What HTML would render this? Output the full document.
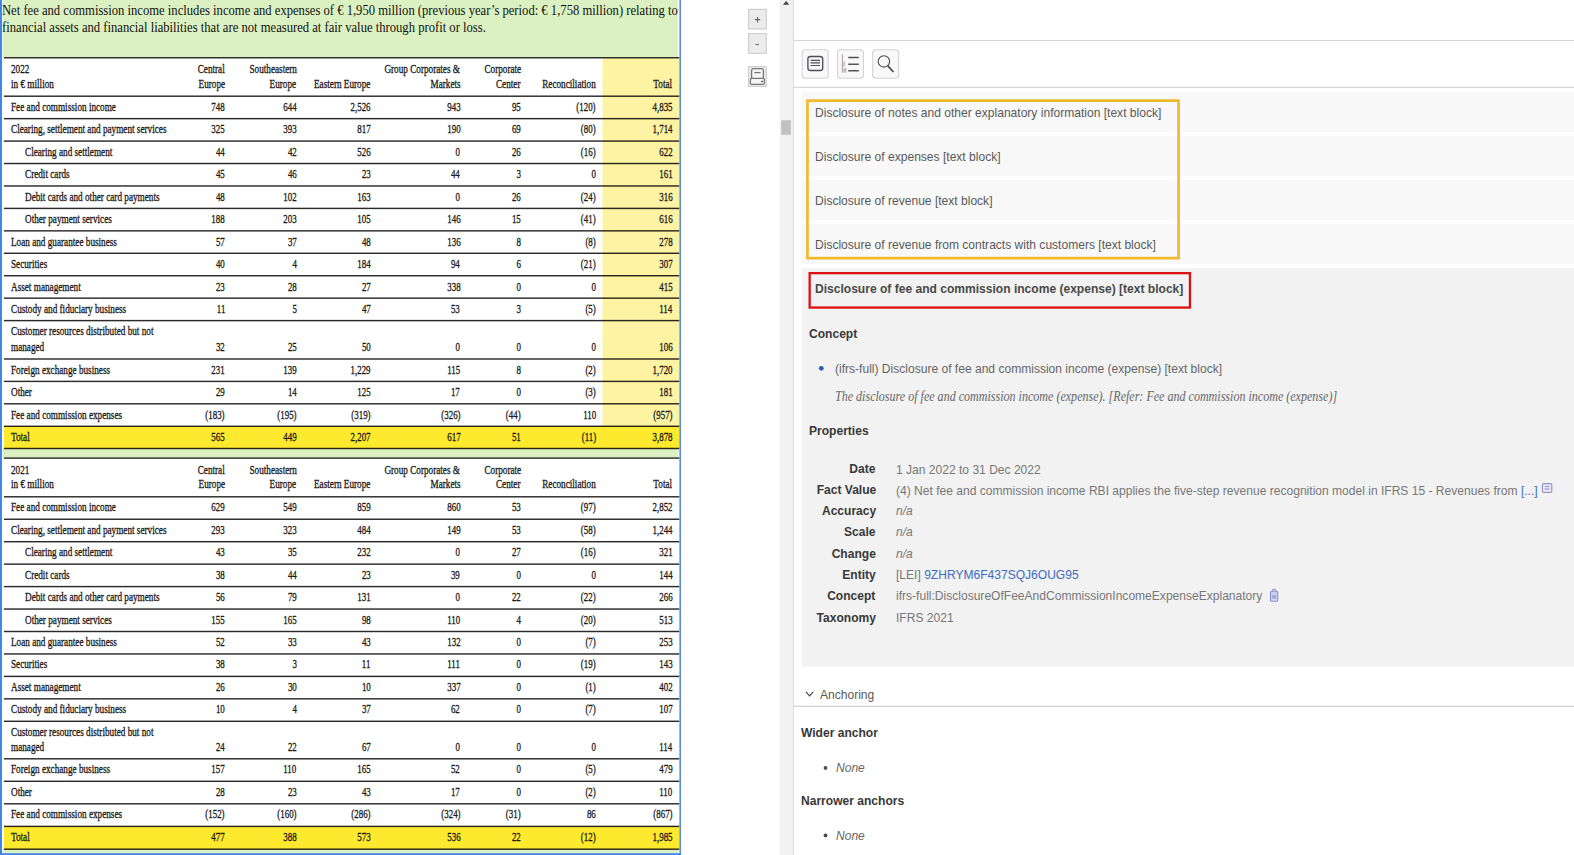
<!DOCTYPE html>
<html lang="en"><head><meta charset="utf-8">
<title>Inline XBRL Viewer</title>
<style>
html,body{margin:0;padding:0;background:#fff}
body{width:1574px;height:855px;overflow:hidden;position:relative;font-family:"Liberation Sans",sans-serif}
#pg{position:absolute;left:0;top:0;width:1574px;height:855px;overflow:hidden}
#sh{position:absolute;left:0;top:0}
.t{position:absolute;white-space:nowrap;line-height:1;transform-origin:0 0;font-family:"Liberation Sans",sans-serif;color:#555}
.r{transform-origin:100% 0}
.s{font-family:"Liberation Serif",serif}
.si{font-family:"Liberation Serif",serif;font-style:italic}
.i{font-style:italic}
.b{font-weight:bold}
.p{color:#111}
.c{color:#1a1a1a;-webkit-text-stroke:0.3px #1a1a1a}
.g00{color:#383838}
.g0{color:#484848}
.g1{color:#595959}
.g2{color:#666}
.g3{color:#777}
.lk{color:#3d6cc0}
</style></head>
<body><div id="pg">
<svg id="sh" width="1574" height="855" viewBox="0 0 1574 855">
<rect x="2.70" y="0.00" width="675.30" height="853.30" fill="#dcf1c1" />
<rect x="2.30" y="57.25" width="677.10" height="391.75" fill="#ffffff" />
<rect x="602.50" y="57.75" width="76.90" height="368.55" fill="#fdf3a3" />
<rect x="3.90" y="426.30" width="675.50" height="22.20" fill="#fde92d" />
<rect x="3.90" y="57.02" width="675.50" height="1.45" fill="rgba(0,0,0,0.83)" />
<rect x="3.90" y="95.48" width="675.50" height="1.45" fill="rgba(0,0,0,0.83)" />
<rect x="3.90" y="117.92" width="675.50" height="1.45" fill="rgba(0,0,0,0.83)" />
<rect x="3.90" y="140.36" width="675.50" height="1.45" fill="rgba(0,0,0,0.83)" />
<rect x="3.90" y="162.80" width="675.50" height="1.45" fill="rgba(0,0,0,0.83)" />
<rect x="3.90" y="185.24" width="675.50" height="1.45" fill="rgba(0,0,0,0.83)" />
<rect x="3.90" y="207.68" width="675.50" height="1.45" fill="rgba(0,0,0,0.83)" />
<rect x="3.90" y="230.12" width="675.50" height="1.45" fill="rgba(0,0,0,0.83)" />
<rect x="3.90" y="252.56" width="675.50" height="1.45" fill="rgba(0,0,0,0.83)" />
<rect x="3.90" y="275.00" width="675.50" height="1.45" fill="rgba(0,0,0,0.83)" />
<rect x="3.90" y="297.44" width="675.50" height="1.45" fill="rgba(0,0,0,0.83)" />
<rect x="3.90" y="319.88" width="675.50" height="1.45" fill="rgba(0,0,0,0.83)" />
<rect x="3.90" y="358.27" width="675.50" height="1.45" fill="rgba(0,0,0,0.83)" />
<rect x="3.90" y="380.67" width="675.50" height="1.45" fill="rgba(0,0,0,0.83)" />
<rect x="3.90" y="403.07" width="675.50" height="1.45" fill="rgba(0,0,0,0.83)" />
<rect x="3.90" y="425.57" width="675.50" height="1.45" fill="rgba(0,0,0,0.83)" />
<rect x="3.90" y="447.77" width="675.50" height="1.45" fill="rgba(0,0,0,0.83)" />
<rect x="2.30" y="457.60" width="677.10" height="392.10" fill="#ffffff" />
<rect x="3.90" y="826.40" width="675.50" height="22.80" fill="#fde92d" />
<rect x="3.90" y="457.38" width="675.50" height="1.45" fill="rgba(0,0,0,0.83)" />
<rect x="3.90" y="496.07" width="675.50" height="1.45" fill="rgba(0,0,0,0.83)" />
<rect x="3.90" y="518.52" width="675.50" height="1.45" fill="rgba(0,0,0,0.83)" />
<rect x="3.90" y="540.98" width="675.50" height="1.45" fill="rgba(0,0,0,0.83)" />
<rect x="3.90" y="563.42" width="675.50" height="1.45" fill="rgba(0,0,0,0.83)" />
<rect x="3.90" y="585.88" width="675.50" height="1.45" fill="rgba(0,0,0,0.83)" />
<rect x="3.90" y="608.32" width="675.50" height="1.45" fill="rgba(0,0,0,0.83)" />
<rect x="3.90" y="630.77" width="675.50" height="1.45" fill="rgba(0,0,0,0.83)" />
<rect x="3.90" y="653.23" width="675.50" height="1.45" fill="rgba(0,0,0,0.83)" />
<rect x="3.90" y="675.67" width="675.50" height="1.45" fill="rgba(0,0,0,0.83)" />
<rect x="3.90" y="698.12" width="675.50" height="1.45" fill="rgba(0,0,0,0.83)" />
<rect x="3.90" y="720.57" width="675.50" height="1.45" fill="rgba(0,0,0,0.83)" />
<rect x="3.90" y="758.07" width="675.50" height="1.45" fill="rgba(0,0,0,0.83)" />
<rect x="3.90" y="780.57" width="675.50" height="1.45" fill="rgba(0,0,0,0.83)" />
<rect x="3.90" y="803.07" width="675.50" height="1.45" fill="rgba(0,0,0,0.83)" />
<rect x="3.90" y="825.67" width="675.50" height="1.45" fill="rgba(0,0,0,0.83)" />
<rect x="3.90" y="848.48" width="675.50" height="1.45" fill="rgba(0,0,0,0.83)" />
<rect x="0.00" y="0.00" width="2.00" height="855.00" fill="#3f87e2" />
<rect x="679.40" y="0.00" width="1.65" height="855.00" fill="#5a8dd4" />
<rect x="0.00" y="853.20" width="681.10" height="1.80" fill="#3f87e2" />
<rect x="748.10" y="8.80" width="18.70" height="20.70" fill="#c9c9c9" />
<rect x="749.10" y="9.80" width="16.70" height="18.70" fill="#ececec" />
<rect x="748.10" y="33.10" width="18.70" height="20.70" fill="#c9c9c9" />
<rect x="749.10" y="34.10" width="16.70" height="18.70" fill="#ececec" />
<rect x="748.10" y="66.10" width="18.70" height="20.80" fill="#c9c9c9" />
<rect x="749.10" y="67.10" width="16.70" height="18.80" fill="#ececec" />
<path d="M754.9 19.6H760.2M757.55 16.9V22.5" stroke="#666" stroke-width="1.1" fill="none"/>
<path d="M755.4 44.5H758.9" stroke="#777" stroke-width="1.2" fill="none"/>
<g stroke="#777" stroke-width="1.3" fill="none"><path d="M751.6 78.2V70.4Q751.6 68.6 753.4 68.6H761.6Q763.4 68.6 763.4 70.4V78.2" fill="#f6f6f6"/><path d="M754.4 72.6H760.6"/><rect x="750.4" y="78.4" width="14" height="6" rx="1.5" fill="#f6f6f6"/></g><circle cx="762" cy="81.4" r="1" fill="#6a6a6a"/>
<rect x="779.80" y="0.00" width="14.10" height="855.00" fill="#f1f1f1" />
<rect x="792.90" y="0.00" width="1.00" height="855.00" fill="#dedede" />
<path d="M783.0 4.8L786.1 1.1L789.2 4.8Z" fill="#404040"/>
<rect x="781.20" y="120.20" width="9.70" height="14.50" fill="#c1c1c1" />
<rect x="793.90" y="39.95" width="780.10" height="1.10" fill="#d4d4d4" />
<rect x="793.90" y="86.75" width="780.10" height="1.10" fill="#d4d4d4" />
<rect x="802.20" y="49.7" width="26" height="28.6" rx="3" fill="#f8f8f8" stroke="#d3d3d3" stroke-width="1.1"/>
<rect x="837.50" y="49.7" width="26" height="28.6" rx="3" fill="#f8f8f8" stroke="#d3d3d3" stroke-width="1.1"/>
<rect x="872.70" y="49.7" width="26" height="28.6" rx="3" fill="#f8f8f8" stroke="#d3d3d3" stroke-width="1.1"/>
<g stroke="#4e4e55" fill="none"><rect x="807.9" y="56.5" width="14.8" height="14" rx="2.6" stroke-width="1.35"/><path d="M810.6 60.4H820M810.6 62.9H820M810.6 65.5H820" stroke-width="1.1"/></g>
<g stroke="#555" stroke-width="1.5" fill="none"><path d="M848.2 57.6H858.8M848.2 64.2H858.8M848.2 70.7H858.8"/></g><g stroke="#9f9297" stroke-width="0.9" fill="none"><path d="M842.4 54.3V72.6M844.1 61.4V66.6M844.1 68V72.6M845.8 68V72.6"/></g>
<g stroke="#4a4a4a" fill="none"><circle cx="883.9" cy="61.4" r="5.7" stroke-width="1.1"/><path d="M887.9 65.9L893.4 72" stroke-width="1.7"/></g>
<rect x="801.60" y="91.80" width="772.40" height="40.20" fill="#f8f8f8" />
<rect x="801.60" y="135.90" width="772.40" height="40.10" fill="#f8f8f8" />
<rect x="801.60" y="180.00" width="772.40" height="40.00" fill="#f8f8f8" />
<rect x="801.60" y="224.00" width="772.40" height="40.00" fill="#f8f8f8" />
<rect x="801.60" y="268.20" width="772.40" height="398.50" fill="#f2f2f2" />
<rect x="807.45" y="100.65" width="371.1" height="157.5" fill="none" stroke="#f0b92c" stroke-width="2.7"/>
<rect x="809.65" y="273.15" width="380.3" height="34.4" fill="none" stroke="#dc1212" stroke-width="2.3"/>
<circle cx="821.3" cy="368.3" r="2.4" fill="#2b5eb4"/>
<g fill="none"><rect x="1542.5" y="483.6" width="9.3" height="8.8" rx="1.2" stroke="#8f94c4" stroke-width="1.15" fill="#f0f0fc"/><path d="M1544.5 486.5H1549.8M1544.5 489H1549.8" stroke="#a5a8dc" stroke-width="1.5"/></g>
<g fill="none"><rect x="1270.5" y="591.2" width="7.2" height="10.1" rx="1.1" stroke="#8190cc" stroke-width="1.05" fill="#c9d1f3"/><path d="M1272.5 591.1Q1272.5 589.3 1274.1 589.3Q1275.7 589.3 1275.7 591.1" stroke="#8190cc" stroke-width="1.05" fill="#e9ecfb"/><rect x="1272.2" y="595" width="3.8" height="3.7" fill="#a4a6cc"/><rect x="1271.5" y="599.1" width="5.2" height="1.3" fill="#d3e2ff"/></g>
<path d="M806.0 691.8L809.6 695.8L813.2 691.8" stroke="#444" stroke-width="1.2" fill="none"/>
<rect x="793.90" y="705.70" width="780.10" height="1.20" fill="#cfcfcf" />
<circle cx="825.5" cy="767.9" r="1.9" fill="#4a4a4a"/>
<circle cx="825.5" cy="835.4" r="1.9" fill="#4a4a4a"/>
</svg>
<span class="t s p" style="left:2.00px;top:2.70px;font-size:14.2px;transform:scaleX(0.8899)">Net fee and commission income includes income and expenses of € 1,950 million (previous year’s period: € 1,758 million) relating to</span>
<span class="t s p" style="left:2.00px;top:19.70px;font-size:14.2px;transform:scaleX(0.8899)">financial assets and financial liabilities that are not measured at fair value through profit or loss.</span>
<span class="t s c" style="left:10.80px;top:63.95px;font-size:11.8px;transform:scaleX(0.7793)">2022</span>
<span class="t s c" style="left:10.80px;top:79.05px;font-size:11.8px;transform:scaleX(0.7793)">in € million</span>
<span class="t r s c" style="right:1349.10px;top:63.95px;font-size:11.8px;transform:scaleX(0.7793)">Central</span>
<span class="t r s c" style="right:1349.10px;top:79.05px;font-size:11.8px;transform:scaleX(0.7793)">Europe</span>
<span class="t r s c" style="right:1277.50px;top:63.95px;font-size:11.8px;transform:scaleX(0.7793)">Southeastern</span>
<span class="t r s c" style="right:1277.50px;top:79.05px;font-size:11.8px;transform:scaleX(0.7793)">Europe</span>
<span class="t r s c" style="right:1203.20px;top:79.05px;font-size:11.8px;transform:scaleX(0.7793)">Eastern Europe</span>
<span class="t r s c" style="right:1113.80px;top:63.95px;font-size:11.8px;transform:scaleX(0.7793)">Group Corporates &amp;</span>
<span class="t r s c" style="right:1113.80px;top:79.05px;font-size:11.8px;transform:scaleX(0.7793)">Markets</span>
<span class="t r s c" style="right:1053.20px;top:63.95px;font-size:11.8px;transform:scaleX(0.7793)">Corporate</span>
<span class="t r s c" style="right:1053.20px;top:79.05px;font-size:11.8px;transform:scaleX(0.7793)">Center</span>
<span class="t r s c" style="right:978.00px;top:79.05px;font-size:11.8px;transform:scaleX(0.7793)">Reconciliation</span>
<span class="t r s c" style="right:901.70px;top:79.05px;font-size:11.8px;transform:scaleX(0.7793)">Total</span>
<span class="t s c" style="left:10.80px;top:102.00px;font-size:11.8px;transform:scaleX(0.7793)">Fee and commission income</span>
<span class="t r s c" style="right:1349.10px;top:102.00px;font-size:11.8px;transform:scaleX(0.7537)">748</span>
<span class="t r s c" style="right:1277.50px;top:102.00px;font-size:11.8px;transform:scaleX(0.7537)">644</span>
<span class="t r s c" style="right:1203.20px;top:102.00px;font-size:11.8px;transform:scaleX(0.7537)">2,526</span>
<span class="t r s c" style="right:1113.80px;top:102.00px;font-size:11.8px;transform:scaleX(0.7537)">943</span>
<span class="t r s c" style="right:1053.20px;top:102.00px;font-size:11.8px;transform:scaleX(0.7537)">95</span>
<span class="t r s c" style="right:978.00px;top:102.00px;font-size:11.8px;transform:scaleX(0.7537)">(120)</span>
<span class="t r s c" style="right:901.70px;top:102.00px;font-size:11.8px;transform:scaleX(0.7537)">4,835</span>
<span class="t s c" style="left:10.80px;top:124.44px;font-size:11.8px;transform:scaleX(0.7793)">Clearing, settlement and payment services</span>
<span class="t r s c" style="right:1349.10px;top:124.44px;font-size:11.8px;transform:scaleX(0.7537)">325</span>
<span class="t r s c" style="right:1277.50px;top:124.44px;font-size:11.8px;transform:scaleX(0.7537)">393</span>
<span class="t r s c" style="right:1203.20px;top:124.44px;font-size:11.8px;transform:scaleX(0.7537)">817</span>
<span class="t r s c" style="right:1113.80px;top:124.44px;font-size:11.8px;transform:scaleX(0.7537)">190</span>
<span class="t r s c" style="right:1053.20px;top:124.44px;font-size:11.8px;transform:scaleX(0.7537)">69</span>
<span class="t r s c" style="right:978.00px;top:124.44px;font-size:11.8px;transform:scaleX(0.7537)">(80)</span>
<span class="t r s c" style="right:901.70px;top:124.44px;font-size:11.8px;transform:scaleX(0.7537)">1,714</span>
<span class="t s c" style="left:25.30px;top:146.88px;font-size:11.8px;transform:scaleX(0.7793)">Clearing and settlement</span>
<span class="t r s c" style="right:1349.10px;top:146.88px;font-size:11.8px;transform:scaleX(0.7537)">44</span>
<span class="t r s c" style="right:1277.50px;top:146.88px;font-size:11.8px;transform:scaleX(0.7537)">42</span>
<span class="t r s c" style="right:1203.20px;top:146.88px;font-size:11.8px;transform:scaleX(0.7537)">526</span>
<span class="t r s c" style="right:1113.80px;top:146.88px;font-size:11.8px;transform:scaleX(0.7537)">0</span>
<span class="t r s c" style="right:1053.20px;top:146.88px;font-size:11.8px;transform:scaleX(0.7537)">26</span>
<span class="t r s c" style="right:978.00px;top:146.88px;font-size:11.8px;transform:scaleX(0.7537)">(16)</span>
<span class="t r s c" style="right:901.70px;top:146.88px;font-size:11.8px;transform:scaleX(0.7537)">622</span>
<span class="t s c" style="left:25.30px;top:169.32px;font-size:11.8px;transform:scaleX(0.7793)">Credit cards</span>
<span class="t r s c" style="right:1349.10px;top:169.32px;font-size:11.8px;transform:scaleX(0.7537)">45</span>
<span class="t r s c" style="right:1277.50px;top:169.32px;font-size:11.8px;transform:scaleX(0.7537)">46</span>
<span class="t r s c" style="right:1203.20px;top:169.32px;font-size:11.8px;transform:scaleX(0.7537)">23</span>
<span class="t r s c" style="right:1113.80px;top:169.32px;font-size:11.8px;transform:scaleX(0.7537)">44</span>
<span class="t r s c" style="right:1053.20px;top:169.32px;font-size:11.8px;transform:scaleX(0.7537)">3</span>
<span class="t r s c" style="right:978.00px;top:169.32px;font-size:11.8px;transform:scaleX(0.7537)">0</span>
<span class="t r s c" style="right:901.70px;top:169.32px;font-size:11.8px;transform:scaleX(0.7537)">161</span>
<span class="t s c" style="left:25.30px;top:191.76px;font-size:11.8px;transform:scaleX(0.7793)">Debit cards and other card payments</span>
<span class="t r s c" style="right:1349.10px;top:191.76px;font-size:11.8px;transform:scaleX(0.7537)">48</span>
<span class="t r s c" style="right:1277.50px;top:191.76px;font-size:11.8px;transform:scaleX(0.7537)">102</span>
<span class="t r s c" style="right:1203.20px;top:191.76px;font-size:11.8px;transform:scaleX(0.7537)">163</span>
<span class="t r s c" style="right:1113.80px;top:191.76px;font-size:11.8px;transform:scaleX(0.7537)">0</span>
<span class="t r s c" style="right:1053.20px;top:191.76px;font-size:11.8px;transform:scaleX(0.7537)">26</span>
<span class="t r s c" style="right:978.00px;top:191.76px;font-size:11.8px;transform:scaleX(0.7537)">(24)</span>
<span class="t r s c" style="right:901.70px;top:191.76px;font-size:11.8px;transform:scaleX(0.7537)">316</span>
<span class="t s c" style="left:25.30px;top:214.20px;font-size:11.8px;transform:scaleX(0.7793)">Other payment services</span>
<span class="t r s c" style="right:1349.10px;top:214.20px;font-size:11.8px;transform:scaleX(0.7537)">188</span>
<span class="t r s c" style="right:1277.50px;top:214.20px;font-size:11.8px;transform:scaleX(0.7537)">203</span>
<span class="t r s c" style="right:1203.20px;top:214.20px;font-size:11.8px;transform:scaleX(0.7537)">105</span>
<span class="t r s c" style="right:1113.80px;top:214.20px;font-size:11.8px;transform:scaleX(0.7537)">146</span>
<span class="t r s c" style="right:1053.20px;top:214.20px;font-size:11.8px;transform:scaleX(0.7537)">15</span>
<span class="t r s c" style="right:978.00px;top:214.20px;font-size:11.8px;transform:scaleX(0.7537)">(41)</span>
<span class="t r s c" style="right:901.70px;top:214.20px;font-size:11.8px;transform:scaleX(0.7537)">616</span>
<span class="t s c" style="left:10.80px;top:236.64px;font-size:11.8px;transform:scaleX(0.7793)">Loan and guarantee business</span>
<span class="t r s c" style="right:1349.10px;top:236.64px;font-size:11.8px;transform:scaleX(0.7537)">57</span>
<span class="t r s c" style="right:1277.50px;top:236.64px;font-size:11.8px;transform:scaleX(0.7537)">37</span>
<span class="t r s c" style="right:1203.20px;top:236.64px;font-size:11.8px;transform:scaleX(0.7537)">48</span>
<span class="t r s c" style="right:1113.80px;top:236.64px;font-size:11.8px;transform:scaleX(0.7537)">136</span>
<span class="t r s c" style="right:1053.20px;top:236.64px;font-size:11.8px;transform:scaleX(0.7537)">8</span>
<span class="t r s c" style="right:978.00px;top:236.64px;font-size:11.8px;transform:scaleX(0.7537)">(8)</span>
<span class="t r s c" style="right:901.70px;top:236.64px;font-size:11.8px;transform:scaleX(0.7537)">278</span>
<span class="t s c" style="left:10.80px;top:259.08px;font-size:11.8px;transform:scaleX(0.7793)">Securities</span>
<span class="t r s c" style="right:1349.10px;top:259.08px;font-size:11.8px;transform:scaleX(0.7537)">40</span>
<span class="t r s c" style="right:1277.50px;top:259.08px;font-size:11.8px;transform:scaleX(0.7537)">4</span>
<span class="t r s c" style="right:1203.20px;top:259.08px;font-size:11.8px;transform:scaleX(0.7537)">184</span>
<span class="t r s c" style="right:1113.80px;top:259.08px;font-size:11.8px;transform:scaleX(0.7537)">94</span>
<span class="t r s c" style="right:1053.20px;top:259.08px;font-size:11.8px;transform:scaleX(0.7537)">6</span>
<span class="t r s c" style="right:978.00px;top:259.08px;font-size:11.8px;transform:scaleX(0.7537)">(21)</span>
<span class="t r s c" style="right:901.70px;top:259.08px;font-size:11.8px;transform:scaleX(0.7537)">307</span>
<span class="t s c" style="left:10.80px;top:281.52px;font-size:11.8px;transform:scaleX(0.7793)">Asset management</span>
<span class="t r s c" style="right:1349.10px;top:281.52px;font-size:11.8px;transform:scaleX(0.7537)">23</span>
<span class="t r s c" style="right:1277.50px;top:281.52px;font-size:11.8px;transform:scaleX(0.7537)">28</span>
<span class="t r s c" style="right:1203.20px;top:281.52px;font-size:11.8px;transform:scaleX(0.7537)">27</span>
<span class="t r s c" style="right:1113.80px;top:281.52px;font-size:11.8px;transform:scaleX(0.7537)">338</span>
<span class="t r s c" style="right:1053.20px;top:281.52px;font-size:11.8px;transform:scaleX(0.7537)">0</span>
<span class="t r s c" style="right:978.00px;top:281.52px;font-size:11.8px;transform:scaleX(0.7537)">0</span>
<span class="t r s c" style="right:901.70px;top:281.52px;font-size:11.8px;transform:scaleX(0.7537)">415</span>
<span class="t s c" style="left:10.80px;top:303.96px;font-size:11.8px;transform:scaleX(0.7793)">Custody and fiduciary business</span>
<span class="t r s c" style="right:1349.10px;top:303.96px;font-size:11.8px;transform:scaleX(0.7537)">11</span>
<span class="t r s c" style="right:1277.50px;top:303.96px;font-size:11.8px;transform:scaleX(0.7537)">5</span>
<span class="t r s c" style="right:1203.20px;top:303.96px;font-size:11.8px;transform:scaleX(0.7537)">47</span>
<span class="t r s c" style="right:1113.80px;top:303.96px;font-size:11.8px;transform:scaleX(0.7537)">53</span>
<span class="t r s c" style="right:1053.20px;top:303.96px;font-size:11.8px;transform:scaleX(0.7537)">3</span>
<span class="t r s c" style="right:978.00px;top:303.96px;font-size:11.8px;transform:scaleX(0.7537)">(5)</span>
<span class="t r s c" style="right:901.70px;top:303.96px;font-size:11.8px;transform:scaleX(0.7537)">114</span>
<span class="t s c" style="left:10.80px;top:326.30px;font-size:11.8px;transform:scaleX(0.7793)">Customer resources distributed but not</span>
<span class="t s c" style="left:10.80px;top:341.70px;font-size:11.8px;transform:scaleX(0.7793)">managed</span>
<span class="t r s c" style="right:1349.10px;top:341.70px;font-size:11.8px;transform:scaleX(0.7537)">32</span>
<span class="t r s c" style="right:1277.50px;top:341.70px;font-size:11.8px;transform:scaleX(0.7537)">25</span>
<span class="t r s c" style="right:1203.20px;top:341.70px;font-size:11.8px;transform:scaleX(0.7537)">50</span>
<span class="t r s c" style="right:1113.80px;top:341.70px;font-size:11.8px;transform:scaleX(0.7537)">0</span>
<span class="t r s c" style="right:1053.20px;top:341.70px;font-size:11.8px;transform:scaleX(0.7537)">0</span>
<span class="t r s c" style="right:978.00px;top:341.70px;font-size:11.8px;transform:scaleX(0.7537)">0</span>
<span class="t r s c" style="right:901.70px;top:341.70px;font-size:11.8px;transform:scaleX(0.7537)">106</span>
<span class="t s c" style="left:10.80px;top:364.80px;font-size:11.8px;transform:scaleX(0.7793)">Foreign exchange business</span>
<span class="t r s c" style="right:1349.10px;top:364.80px;font-size:11.8px;transform:scaleX(0.7537)">231</span>
<span class="t r s c" style="right:1277.50px;top:364.80px;font-size:11.8px;transform:scaleX(0.7537)">139</span>
<span class="t r s c" style="right:1203.20px;top:364.80px;font-size:11.8px;transform:scaleX(0.7537)">1,229</span>
<span class="t r s c" style="right:1113.80px;top:364.80px;font-size:11.8px;transform:scaleX(0.7537)">115</span>
<span class="t r s c" style="right:1053.20px;top:364.80px;font-size:11.8px;transform:scaleX(0.7537)">8</span>
<span class="t r s c" style="right:978.00px;top:364.80px;font-size:11.8px;transform:scaleX(0.7537)">(2)</span>
<span class="t r s c" style="right:901.70px;top:364.80px;font-size:11.8px;transform:scaleX(0.7537)">1,720</span>
<span class="t s c" style="left:10.80px;top:387.20px;font-size:11.8px;transform:scaleX(0.7793)">Other</span>
<span class="t r s c" style="right:1349.10px;top:387.20px;font-size:11.8px;transform:scaleX(0.7537)">29</span>
<span class="t r s c" style="right:1277.50px;top:387.20px;font-size:11.8px;transform:scaleX(0.7537)">14</span>
<span class="t r s c" style="right:1203.20px;top:387.20px;font-size:11.8px;transform:scaleX(0.7537)">125</span>
<span class="t r s c" style="right:1113.80px;top:387.20px;font-size:11.8px;transform:scaleX(0.7537)">17</span>
<span class="t r s c" style="right:1053.20px;top:387.20px;font-size:11.8px;transform:scaleX(0.7537)">0</span>
<span class="t r s c" style="right:978.00px;top:387.20px;font-size:11.8px;transform:scaleX(0.7537)">(3)</span>
<span class="t r s c" style="right:901.70px;top:387.20px;font-size:11.8px;transform:scaleX(0.7537)">181</span>
<span class="t s c" style="left:10.80px;top:409.60px;font-size:11.8px;transform:scaleX(0.7793)">Fee and commission expenses</span>
<span class="t r s c" style="right:1349.10px;top:409.60px;font-size:11.8px;transform:scaleX(0.7537)">(183)</span>
<span class="t r s c" style="right:1277.50px;top:409.60px;font-size:11.8px;transform:scaleX(0.7537)">(195)</span>
<span class="t r s c" style="right:1203.20px;top:409.60px;font-size:11.8px;transform:scaleX(0.7537)">(319)</span>
<span class="t r s c" style="right:1113.80px;top:409.60px;font-size:11.8px;transform:scaleX(0.7537)">(326)</span>
<span class="t r s c" style="right:1053.20px;top:409.60px;font-size:11.8px;transform:scaleX(0.7537)">(44)</span>
<span class="t r s c" style="right:978.00px;top:409.60px;font-size:11.8px;transform:scaleX(0.7537)">110</span>
<span class="t r s c" style="right:901.70px;top:409.60px;font-size:11.8px;transform:scaleX(0.7537)">(957)</span>
<span class="t s c" style="left:10.80px;top:432.10px;font-size:11.8px;transform:scaleX(0.7793)">Total</span>
<span class="t r s c" style="right:1349.10px;top:432.10px;font-size:11.8px;transform:scaleX(0.7537)">565</span>
<span class="t r s c" style="right:1277.50px;top:432.10px;font-size:11.8px;transform:scaleX(0.7537)">449</span>
<span class="t r s c" style="right:1203.20px;top:432.10px;font-size:11.8px;transform:scaleX(0.7537)">2,207</span>
<span class="t r s c" style="right:1113.80px;top:432.10px;font-size:11.8px;transform:scaleX(0.7537)">617</span>
<span class="t r s c" style="right:1053.20px;top:432.10px;font-size:11.8px;transform:scaleX(0.7537)">51</span>
<span class="t r s c" style="right:978.00px;top:432.10px;font-size:11.8px;transform:scaleX(0.7537)">(11)</span>
<span class="t r s c" style="right:901.70px;top:432.10px;font-size:11.8px;transform:scaleX(0.7537)">3,878</span>
<span class="t s c" style="left:10.80px;top:464.70px;font-size:11.8px;transform:scaleX(0.7793)">2021</span>
<span class="t s c" style="left:10.80px;top:479.40px;font-size:11.8px;transform:scaleX(0.7793)">in € million</span>
<span class="t r s c" style="right:1349.10px;top:464.70px;font-size:11.8px;transform:scaleX(0.7793)">Central</span>
<span class="t r s c" style="right:1349.10px;top:479.40px;font-size:11.8px;transform:scaleX(0.7793)">Europe</span>
<span class="t r s c" style="right:1277.50px;top:464.70px;font-size:11.8px;transform:scaleX(0.7793)">Southeastern</span>
<span class="t r s c" style="right:1277.50px;top:479.40px;font-size:11.8px;transform:scaleX(0.7793)">Europe</span>
<span class="t r s c" style="right:1203.20px;top:479.40px;font-size:11.8px;transform:scaleX(0.7793)">Eastern Europe</span>
<span class="t r s c" style="right:1113.80px;top:464.70px;font-size:11.8px;transform:scaleX(0.7793)">Group Corporates &amp;</span>
<span class="t r s c" style="right:1113.80px;top:479.40px;font-size:11.8px;transform:scaleX(0.7793)">Markets</span>
<span class="t r s c" style="right:1053.20px;top:464.70px;font-size:11.8px;transform:scaleX(0.7793)">Corporate</span>
<span class="t r s c" style="right:1053.20px;top:479.40px;font-size:11.8px;transform:scaleX(0.7793)">Center</span>
<span class="t r s c" style="right:978.00px;top:479.40px;font-size:11.8px;transform:scaleX(0.7793)">Reconciliation</span>
<span class="t r s c" style="right:901.70px;top:479.40px;font-size:11.8px;transform:scaleX(0.7793)">Total</span>
<span class="t s c" style="left:10.80px;top:502.30px;font-size:11.8px;transform:scaleX(0.7793)">Fee and commission income</span>
<span class="t r s c" style="right:1349.10px;top:502.30px;font-size:11.8px;transform:scaleX(0.7537)">629</span>
<span class="t r s c" style="right:1277.50px;top:502.30px;font-size:11.8px;transform:scaleX(0.7537)">549</span>
<span class="t r s c" style="right:1203.20px;top:502.30px;font-size:11.8px;transform:scaleX(0.7537)">859</span>
<span class="t r s c" style="right:1113.80px;top:502.30px;font-size:11.8px;transform:scaleX(0.7537)">860</span>
<span class="t r s c" style="right:1053.20px;top:502.30px;font-size:11.8px;transform:scaleX(0.7537)">53</span>
<span class="t r s c" style="right:978.00px;top:502.30px;font-size:11.8px;transform:scaleX(0.7537)">(97)</span>
<span class="t r s c" style="right:901.70px;top:502.30px;font-size:11.8px;transform:scaleX(0.7537)">2,852</span>
<span class="t s c" style="left:10.80px;top:524.75px;font-size:11.8px;transform:scaleX(0.7793)">Clearing, settlement and payment services</span>
<span class="t r s c" style="right:1349.10px;top:524.75px;font-size:11.8px;transform:scaleX(0.7537)">293</span>
<span class="t r s c" style="right:1277.50px;top:524.75px;font-size:11.8px;transform:scaleX(0.7537)">323</span>
<span class="t r s c" style="right:1203.20px;top:524.75px;font-size:11.8px;transform:scaleX(0.7537)">484</span>
<span class="t r s c" style="right:1113.80px;top:524.75px;font-size:11.8px;transform:scaleX(0.7537)">149</span>
<span class="t r s c" style="right:1053.20px;top:524.75px;font-size:11.8px;transform:scaleX(0.7537)">53</span>
<span class="t r s c" style="right:978.00px;top:524.75px;font-size:11.8px;transform:scaleX(0.7537)">(58)</span>
<span class="t r s c" style="right:901.70px;top:524.75px;font-size:11.8px;transform:scaleX(0.7537)">1,244</span>
<span class="t s c" style="left:25.30px;top:547.20px;font-size:11.8px;transform:scaleX(0.7793)">Clearing and settlement</span>
<span class="t r s c" style="right:1349.10px;top:547.20px;font-size:11.8px;transform:scaleX(0.7537)">43</span>
<span class="t r s c" style="right:1277.50px;top:547.20px;font-size:11.8px;transform:scaleX(0.7537)">35</span>
<span class="t r s c" style="right:1203.20px;top:547.20px;font-size:11.8px;transform:scaleX(0.7537)">232</span>
<span class="t r s c" style="right:1113.80px;top:547.20px;font-size:11.8px;transform:scaleX(0.7537)">0</span>
<span class="t r s c" style="right:1053.20px;top:547.20px;font-size:11.8px;transform:scaleX(0.7537)">27</span>
<span class="t r s c" style="right:978.00px;top:547.20px;font-size:11.8px;transform:scaleX(0.7537)">(16)</span>
<span class="t r s c" style="right:901.70px;top:547.20px;font-size:11.8px;transform:scaleX(0.7537)">321</span>
<span class="t s c" style="left:25.30px;top:569.65px;font-size:11.8px;transform:scaleX(0.7793)">Credit cards</span>
<span class="t r s c" style="right:1349.10px;top:569.65px;font-size:11.8px;transform:scaleX(0.7537)">38</span>
<span class="t r s c" style="right:1277.50px;top:569.65px;font-size:11.8px;transform:scaleX(0.7537)">44</span>
<span class="t r s c" style="right:1203.20px;top:569.65px;font-size:11.8px;transform:scaleX(0.7537)">23</span>
<span class="t r s c" style="right:1113.80px;top:569.65px;font-size:11.8px;transform:scaleX(0.7537)">39</span>
<span class="t r s c" style="right:1053.20px;top:569.65px;font-size:11.8px;transform:scaleX(0.7537)">0</span>
<span class="t r s c" style="right:978.00px;top:569.65px;font-size:11.8px;transform:scaleX(0.7537)">0</span>
<span class="t r s c" style="right:901.70px;top:569.65px;font-size:11.8px;transform:scaleX(0.7537)">144</span>
<span class="t s c" style="left:25.30px;top:592.10px;font-size:11.8px;transform:scaleX(0.7793)">Debit cards and other card payments</span>
<span class="t r s c" style="right:1349.10px;top:592.10px;font-size:11.8px;transform:scaleX(0.7537)">56</span>
<span class="t r s c" style="right:1277.50px;top:592.10px;font-size:11.8px;transform:scaleX(0.7537)">79</span>
<span class="t r s c" style="right:1203.20px;top:592.10px;font-size:11.8px;transform:scaleX(0.7537)">131</span>
<span class="t r s c" style="right:1113.80px;top:592.10px;font-size:11.8px;transform:scaleX(0.7537)">0</span>
<span class="t r s c" style="right:1053.20px;top:592.10px;font-size:11.8px;transform:scaleX(0.7537)">22</span>
<span class="t r s c" style="right:978.00px;top:592.10px;font-size:11.8px;transform:scaleX(0.7537)">(22)</span>
<span class="t r s c" style="right:901.70px;top:592.10px;font-size:11.8px;transform:scaleX(0.7537)">266</span>
<span class="t s c" style="left:25.30px;top:614.55px;font-size:11.8px;transform:scaleX(0.7793)">Other payment services</span>
<span class="t r s c" style="right:1349.10px;top:614.55px;font-size:11.8px;transform:scaleX(0.7537)">155</span>
<span class="t r s c" style="right:1277.50px;top:614.55px;font-size:11.8px;transform:scaleX(0.7537)">165</span>
<span class="t r s c" style="right:1203.20px;top:614.55px;font-size:11.8px;transform:scaleX(0.7537)">98</span>
<span class="t r s c" style="right:1113.80px;top:614.55px;font-size:11.8px;transform:scaleX(0.7537)">110</span>
<span class="t r s c" style="right:1053.20px;top:614.55px;font-size:11.8px;transform:scaleX(0.7537)">4</span>
<span class="t r s c" style="right:978.00px;top:614.55px;font-size:11.8px;transform:scaleX(0.7537)">(20)</span>
<span class="t r s c" style="right:901.70px;top:614.55px;font-size:11.8px;transform:scaleX(0.7537)">513</span>
<span class="t s c" style="left:10.80px;top:637.00px;font-size:11.8px;transform:scaleX(0.7793)">Loan and guarantee business</span>
<span class="t r s c" style="right:1349.10px;top:637.00px;font-size:11.8px;transform:scaleX(0.7537)">52</span>
<span class="t r s c" style="right:1277.50px;top:637.00px;font-size:11.8px;transform:scaleX(0.7537)">33</span>
<span class="t r s c" style="right:1203.20px;top:637.00px;font-size:11.8px;transform:scaleX(0.7537)">43</span>
<span class="t r s c" style="right:1113.80px;top:637.00px;font-size:11.8px;transform:scaleX(0.7537)">132</span>
<span class="t r s c" style="right:1053.20px;top:637.00px;font-size:11.8px;transform:scaleX(0.7537)">0</span>
<span class="t r s c" style="right:978.00px;top:637.00px;font-size:11.8px;transform:scaleX(0.7537)">(7)</span>
<span class="t r s c" style="right:901.70px;top:637.00px;font-size:11.8px;transform:scaleX(0.7537)">253</span>
<span class="t s c" style="left:10.80px;top:659.45px;font-size:11.8px;transform:scaleX(0.7793)">Securities</span>
<span class="t r s c" style="right:1349.10px;top:659.45px;font-size:11.8px;transform:scaleX(0.7537)">38</span>
<span class="t r s c" style="right:1277.50px;top:659.45px;font-size:11.8px;transform:scaleX(0.7537)">3</span>
<span class="t r s c" style="right:1203.20px;top:659.45px;font-size:11.8px;transform:scaleX(0.7537)">11</span>
<span class="t r s c" style="right:1113.80px;top:659.45px;font-size:11.8px;transform:scaleX(0.7537)">111</span>
<span class="t r s c" style="right:1053.20px;top:659.45px;font-size:11.8px;transform:scaleX(0.7537)">0</span>
<span class="t r s c" style="right:978.00px;top:659.45px;font-size:11.8px;transform:scaleX(0.7537)">(19)</span>
<span class="t r s c" style="right:901.70px;top:659.45px;font-size:11.8px;transform:scaleX(0.7537)">143</span>
<span class="t s c" style="left:10.80px;top:681.90px;font-size:11.8px;transform:scaleX(0.7793)">Asset management</span>
<span class="t r s c" style="right:1349.10px;top:681.90px;font-size:11.8px;transform:scaleX(0.7537)">26</span>
<span class="t r s c" style="right:1277.50px;top:681.90px;font-size:11.8px;transform:scaleX(0.7537)">30</span>
<span class="t r s c" style="right:1203.20px;top:681.90px;font-size:11.8px;transform:scaleX(0.7537)">10</span>
<span class="t r s c" style="right:1113.80px;top:681.90px;font-size:11.8px;transform:scaleX(0.7537)">337</span>
<span class="t r s c" style="right:1053.20px;top:681.90px;font-size:11.8px;transform:scaleX(0.7537)">0</span>
<span class="t r s c" style="right:978.00px;top:681.90px;font-size:11.8px;transform:scaleX(0.7537)">(1)</span>
<span class="t r s c" style="right:901.70px;top:681.90px;font-size:11.8px;transform:scaleX(0.7537)">402</span>
<span class="t s c" style="left:10.80px;top:704.35px;font-size:11.8px;transform:scaleX(0.7793)">Custody and fiduciary business</span>
<span class="t r s c" style="right:1349.10px;top:704.35px;font-size:11.8px;transform:scaleX(0.7537)">10</span>
<span class="t r s c" style="right:1277.50px;top:704.35px;font-size:11.8px;transform:scaleX(0.7537)">4</span>
<span class="t r s c" style="right:1203.20px;top:704.35px;font-size:11.8px;transform:scaleX(0.7537)">37</span>
<span class="t r s c" style="right:1113.80px;top:704.35px;font-size:11.8px;transform:scaleX(0.7537)">62</span>
<span class="t r s c" style="right:1053.20px;top:704.35px;font-size:11.8px;transform:scaleX(0.7537)">0</span>
<span class="t r s c" style="right:978.00px;top:704.35px;font-size:11.8px;transform:scaleX(0.7537)">(7)</span>
<span class="t r s c" style="right:901.70px;top:704.35px;font-size:11.8px;transform:scaleX(0.7537)">107</span>
<span class="t s c" style="left:10.80px;top:727.00px;font-size:11.8px;transform:scaleX(0.7793)">Customer resources distributed but not</span>
<span class="t s c" style="left:10.80px;top:742.40px;font-size:11.8px;transform:scaleX(0.7793)">managed</span>
<span class="t r s c" style="right:1349.10px;top:742.40px;font-size:11.8px;transform:scaleX(0.7537)">24</span>
<span class="t r s c" style="right:1277.50px;top:742.40px;font-size:11.8px;transform:scaleX(0.7537)">22</span>
<span class="t r s c" style="right:1203.20px;top:742.40px;font-size:11.8px;transform:scaleX(0.7537)">67</span>
<span class="t r s c" style="right:1113.80px;top:742.40px;font-size:11.8px;transform:scaleX(0.7537)">0</span>
<span class="t r s c" style="right:1053.20px;top:742.40px;font-size:11.8px;transform:scaleX(0.7537)">0</span>
<span class="t r s c" style="right:978.00px;top:742.40px;font-size:11.8px;transform:scaleX(0.7537)">0</span>
<span class="t r s c" style="right:901.70px;top:742.40px;font-size:11.8px;transform:scaleX(0.7537)">114</span>
<span class="t s c" style="left:10.80px;top:764.30px;font-size:11.8px;transform:scaleX(0.7793)">Foreign exchange business</span>
<span class="t r s c" style="right:1349.10px;top:764.30px;font-size:11.8px;transform:scaleX(0.7537)">157</span>
<span class="t r s c" style="right:1277.50px;top:764.30px;font-size:11.8px;transform:scaleX(0.7537)">110</span>
<span class="t r s c" style="right:1203.20px;top:764.30px;font-size:11.8px;transform:scaleX(0.7537)">165</span>
<span class="t r s c" style="right:1113.80px;top:764.30px;font-size:11.8px;transform:scaleX(0.7537)">52</span>
<span class="t r s c" style="right:1053.20px;top:764.30px;font-size:11.8px;transform:scaleX(0.7537)">0</span>
<span class="t r s c" style="right:978.00px;top:764.30px;font-size:11.8px;transform:scaleX(0.7537)">(5)</span>
<span class="t r s c" style="right:901.70px;top:764.30px;font-size:11.8px;transform:scaleX(0.7537)">479</span>
<span class="t s c" style="left:10.80px;top:786.80px;font-size:11.8px;transform:scaleX(0.7793)">Other</span>
<span class="t r s c" style="right:1349.10px;top:786.80px;font-size:11.8px;transform:scaleX(0.7537)">28</span>
<span class="t r s c" style="right:1277.50px;top:786.80px;font-size:11.8px;transform:scaleX(0.7537)">23</span>
<span class="t r s c" style="right:1203.20px;top:786.80px;font-size:11.8px;transform:scaleX(0.7537)">43</span>
<span class="t r s c" style="right:1113.80px;top:786.80px;font-size:11.8px;transform:scaleX(0.7537)">17</span>
<span class="t r s c" style="right:1053.20px;top:786.80px;font-size:11.8px;transform:scaleX(0.7537)">0</span>
<span class="t r s c" style="right:978.00px;top:786.80px;font-size:11.8px;transform:scaleX(0.7537)">(2)</span>
<span class="t r s c" style="right:901.70px;top:786.80px;font-size:11.8px;transform:scaleX(0.7537)">110</span>
<span class="t s c" style="left:10.80px;top:809.30px;font-size:11.8px;transform:scaleX(0.7793)">Fee and commission expenses</span>
<span class="t r s c" style="right:1349.10px;top:809.30px;font-size:11.8px;transform:scaleX(0.7537)">(152)</span>
<span class="t r s c" style="right:1277.50px;top:809.30px;font-size:11.8px;transform:scaleX(0.7537)">(160)</span>
<span class="t r s c" style="right:1203.20px;top:809.30px;font-size:11.8px;transform:scaleX(0.7537)">(286)</span>
<span class="t r s c" style="right:1113.80px;top:809.30px;font-size:11.8px;transform:scaleX(0.7537)">(324)</span>
<span class="t r s c" style="right:1053.20px;top:809.30px;font-size:11.8px;transform:scaleX(0.7537)">(31)</span>
<span class="t r s c" style="right:978.00px;top:809.30px;font-size:11.8px;transform:scaleX(0.7537)">86</span>
<span class="t r s c" style="right:901.70px;top:809.30px;font-size:11.8px;transform:scaleX(0.7537)">(867)</span>
<span class="t s c" style="left:10.80px;top:831.70px;font-size:11.8px;transform:scaleX(0.7793)">Total</span>
<span class="t r s c" style="right:1349.10px;top:831.70px;font-size:11.8px;transform:scaleX(0.7537)">477</span>
<span class="t r s c" style="right:1277.50px;top:831.70px;font-size:11.8px;transform:scaleX(0.7537)">388</span>
<span class="t r s c" style="right:1203.20px;top:831.70px;font-size:11.8px;transform:scaleX(0.7537)">573</span>
<span class="t r s c" style="right:1113.80px;top:831.70px;font-size:11.8px;transform:scaleX(0.7537)">536</span>
<span class="t r s c" style="right:1053.20px;top:831.70px;font-size:11.8px;transform:scaleX(0.7537)">22</span>
<span class="t r s c" style="right:978.00px;top:831.70px;font-size:11.8px;transform:scaleX(0.7537)">(12)</span>
<span class="t r s c" style="right:901.70px;top:831.70px;font-size:11.8px;transform:scaleX(0.7537)">1,985</span>
<span class="t g1" style="left:815.20px;top:106.00px;font-size:13.6px;transform:scaleX(0.8865)">Disclosure of notes and other explanatory information [text block]</span>
<span class="t g1" style="left:815.20px;top:150.00px;font-size:13.6px;transform:scaleX(0.8865)">Disclosure of expenses [text block]</span>
<span class="t g1" style="left:815.20px;top:194.00px;font-size:13.6px;transform:scaleX(0.8865)">Disclosure of revenue [text block]</span>
<span class="t g1" style="left:815.20px;top:238.00px;font-size:13.6px;transform:scaleX(0.8865)">Disclosure of revenue from contracts with customers [text block]</span>
<span class="t b g0" style="left:815.00px;top:282.00px;font-size:13.6px;transform:scaleX(0.8865)">Disclosure of fee and commission income (expense) [text block]</span>
<span class="t b g00" style="left:809.20px;top:327.00px;font-size:13.6px;transform:scaleX(0.8865)">Concept</span>
<span class="t g2" style="left:835.00px;top:362.00px;font-size:13.6px;transform:scaleX(0.8865)">(ifrs-full) Disclosure of fee and commission income (expense) [text block]</span>
<span class="t si g2" style="left:834.80px;top:390.00px;font-size:13.6px;transform:scaleX(0.8863)">The disclosure of fee and commission income (expense). [Refer: Fee and commission income (expense)]</span>
<span class="t b g00" style="left:809.00px;top:424.00px;font-size:13.6px;transform:scaleX(0.8865)">Properties</span>
<span class="t r b g00" style="right:698.20px;top:462.00px;font-size:13.6px;transform:scaleX(0.8865)">Date</span>
<span class="t r b g00" style="right:698.20px;top:483.00px;font-size:13.6px;transform:scaleX(0.8865)">Fact Value</span>
<span class="t r b g00" style="right:698.20px;top:504.00px;font-size:13.6px;transform:scaleX(0.8865)">Accuracy</span>
<span class="t r b g00" style="right:698.20px;top:525.00px;font-size:13.6px;transform:scaleX(0.8865)">Scale</span>
<span class="t r b g00" style="right:698.20px;top:547.00px;font-size:13.6px;transform:scaleX(0.8865)">Change</span>
<span class="t r b g00" style="right:698.20px;top:568.00px;font-size:13.6px;transform:scaleX(0.8865)">Entity</span>
<span class="t r b g00" style="right:698.20px;top:589.00px;font-size:13.6px;transform:scaleX(0.8865)">Concept</span>
<span class="t r b g00" style="right:698.20px;top:611.00px;font-size:13.6px;transform:scaleX(0.8865)">Taxonomy</span>
<span class="t g3" style="left:895.80px;top:463.00px;font-size:13.6px;transform:scaleX(0.8865)">1 Jan 2022 to 31 Dec 2022</span>
<span class="t g3" style="left:895.80px;top:484.00px;font-size:13.6px;transform:scaleX(0.8865)">(4) Net fee and commission income RBI applies the five-step revenue recognition model in IFRS 15 - Revenues from <span class="lk">[...]</span></span>
<span class="t i g3" style="left:895.80px;top:504.00px;font-size:13.6px;transform:scaleX(0.8865)">n/a</span>
<span class="t i g3" style="left:895.80px;top:525.00px;font-size:13.6px;transform:scaleX(0.8865)">n/a</span>
<span class="t i g3" style="left:895.80px;top:547.00px;font-size:13.6px;transform:scaleX(0.8865)">n/a</span>
<span class="t g3" style="left:895.80px;top:568.00px;font-size:13.6px;transform:scaleX(0.8865)">[LEI] <span class="lk">9ZHRYM6F437SQJ6OUG95</span></span>
<span class="t g3" style="left:895.80px;top:589.00px;font-size:13.6px;transform:scaleX(0.8865)">ifrs-full:DisclosureOfFeeAndCommissionIncomeExpenseExplanatory</span>
<span class="t g3" style="left:895.80px;top:611.00px;font-size:13.6px;transform:scaleX(0.8865)">IFRS 2021</span>
<span class="t g1" style="left:819.90px;top:688.00px;font-size:13.6px;transform:scaleX(0.8865)">Anchoring</span>
<span class="t b g00" style="left:801.40px;top:726.00px;font-size:13.6px;transform:scaleX(0.8865)">Wider anchor</span>
<span class="t i g2" style="left:836.00px;top:761.00px;font-size:13.6px;transform:scaleX(0.8865)">None</span>
<span class="t b g00" style="left:801.40px;top:794.00px;font-size:13.6px;transform:scaleX(0.8865)">Narrower anchors</span>
<span class="t i g2" style="left:836.00px;top:829.00px;font-size:13.6px;transform:scaleX(0.8865)">None</span>
</div></body></html>
